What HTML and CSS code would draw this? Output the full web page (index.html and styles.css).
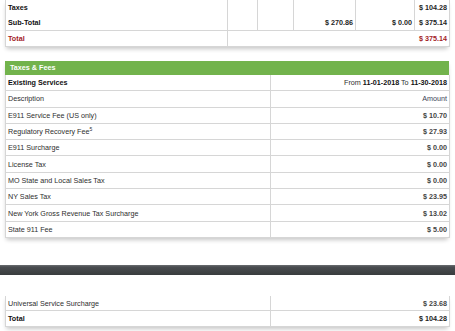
FILE: index.html
```html
<!DOCTYPE html>
<html>
<head>
<meta charset="utf-8">
<link rel="stylesheet" href="styles.css">
</head>
<body>
<div class="wrap">
  <div class="card">
    <table class="summary">
      <colgroup>
        <col class="c1"><col class="c2"><col class="c3"><col class="c4"><col class="c5"><col class="c6">
      </colgroup>
      <tr class="plain">
        <td class="lbl">Taxes</td><td></td><td></td><td></td><td></td><td class="num">$ 104.28</td>
      </tr>
      <tr class="plain">
        <td class="lbl">Sub-Total</td><td></td><td></td><td class="num">$ 270.86</td><td class="num">$ 0.00</td><td class="num">$ 375.14</td>
      </tr>
      <tr class="total">
        <td class="lbl red">Total</td><td colspan="5" class="num red">$ 375.14</td>
      </tr>
    </table>
  </div>

  <div class="card fees-card">
    <div class="green">Taxes &amp; Fees</div>
    <table class="fees">
      <colgroup><col class="f1"><col class="f2"></colgroup>
      <tr><td class="lbl">Existing Services</td><td class="r">From <b>11-01-2018</b> To <b>11-30-2018</b></td></tr>
      <tr><td>Description</td><td class="r amt-h">Amount</td></tr>
      <tr><td>E911 Service Fee (US only)</td><td class="num2">$ 10.70</td></tr>
      <tr><td>Regulatory Recovery Fee<sup>5</sup></td><td class="num2">$ 27.93</td></tr>
      <tr><td>E911 Surcharge</td><td class="num2">$ 0.00</td></tr>
      <tr><td>License Tax</td><td class="num2">$ 0.00</td></tr>
      <tr><td>MO State and Local Sales Tax</td><td class="num2">$ 0.00</td></tr>
      <tr><td>NY Sales Tax</td><td class="num2">$ 23.95</td></tr>
      <tr><td>New York Gross Revenue Tax Surcharge</td><td class="num2">$ 13.02</td></tr>
      <tr><td>State 911 Fee</td><td class="num2">$ 5.00</td></tr>
    </table>
  </div>
</div>

<div class="band"></div>

<div class="wrap">
  <div class="card bottom-card">
    <table class="fees bottom">
      <colgroup><col class="f1"><col class="f2"></colgroup>
      <tr><td>Universal Service Surcharge</td><td class="num2">$ 23.68</td></tr>
      <tr><td class="lbl">Total</td><td class="num2 dark">$ 104.28</td></tr>
    </table>
  </div>
</div>
</body>
</html>
```

FILE: styles.css
```css
* { box-sizing: border-box; }
html, body { margin: 0; padding: 0; background: #fff; }
body {
  font-family: "Liberation Sans", Arial, Helvetica, sans-serif;
  font-size: 7.2px;
  color: #2e2e2e;
  width: 455px;
  height: 331px;
  overflow: hidden;
}
.wrap { padding: 0 6px 0 5px; }

.card {
  background: #fff;
  border-radius: 0 0 3px 3px;
  box-shadow: 0 3px 4px -1px rgba(0, 0, 0, 0.22);
}

table {
  border-collapse: collapse;
  table-layout: fixed;
  width: 100%;
}
td {
  border: 1px solid #d6d6d6;
  padding: 0 3px;
  white-space: nowrap;
  overflow: hidden;
  vertical-align: middle;
  color: #2e2e2e;
}

/* summary table */
.summary .c1 { width: 222px; }
.summary .c2 { width: 30px; }
.summary .c3 { width: 36px; }
.summary .c4 { width: 62px; }
.summary .c5 { width: 59px; }
.summary .c6 { width: 35px; }
.summary tr.plain td { border-top: none; border-bottom: none; height: 15px; }
.summary tr.plain + tr.plain td { border-bottom: 1px solid #d6d6d6; }
.summary tr.total td { height: 16px; }
td.lbl { font-weight: bold; color: #111; padding-left: 2px; }
td.num { text-align: right; font-weight: bold; color: #1e1e1e; padding-right: 2px; }
td.red { color: #a3221f; }

/* fees */
.fees-card { margin-top: 14px; }
.green {
  height: 14px;
  background: #72b34c;
  color: #fff;
  font-weight: bold;
  line-height: 14px;
  padding-left: 5px;
}
.fees .f1 { width: 265px; }
.fees .f2 { width: 179px; }
.fees td { height: 16.3px; }
.fees tr:first-child td { border-top: none; }
.fees td:first-child { padding-left: 2px; }
td.r { text-align: right; padding-right: 2px; }
td.r b { color: #111; }
td.amt-h { color: #3a3f55; }
td.num2 { text-align: right; font-weight: bold; color: #444; padding-right: 2px; }
td.dark { color: #222; }
sup { font-size: 5px; line-height: 0; vertical-align: 3px; }

.band {
  margin-top: 27px;
  height: 10px;
  background: linear-gradient(#6b6e71 0, #4a4d50 20%, #393c3e 100%);
}

.bottom-card { margin-top: 21px; }
.bottom td { height: 15px; }
.bottom tr:last-child td { height: 15.5px; }
```
